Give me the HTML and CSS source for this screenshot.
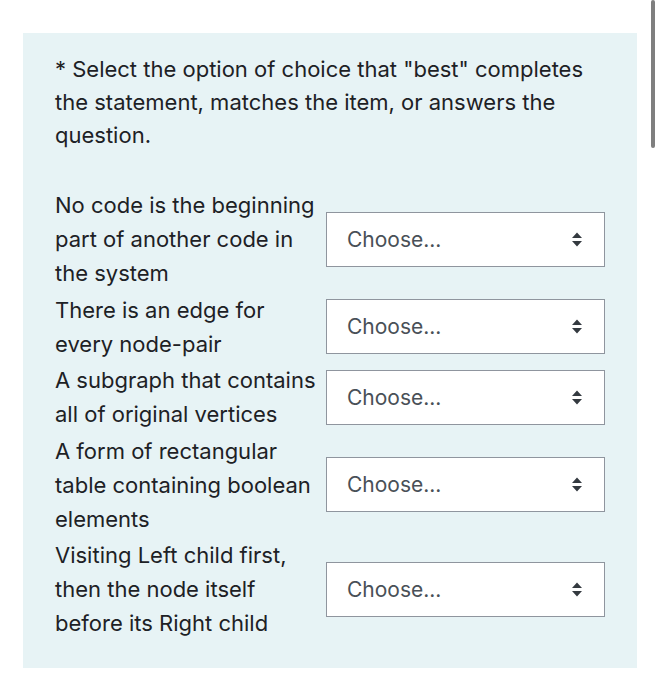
FILE: index.html
```html
<!DOCTYPE html>
<html>
<head>
<meta charset="utf-8">
<link rel="stylesheet" href="styles.css">
</head>
<body>
<div class="scrollbar"></div>
<div class="panel">
  <p class="prompt">* Select the option of choice that "best" completes the statement, matches the item, or answers the question.</p>
  <div class="rows">
    <div class="row">
      <div class="label">No code is the beginning part of another code in the system</div>
      <div class="select"><span>Choose...</span><svg class="arrows" width="10" height="15" viewBox="0 0 10 15"><path d="M5 0.5 L10 6 H0 Z M5 14.5 L10 9 H0 Z" fill="#343a40"/></svg></div>
    </div>
    <div class="row">
      <div class="label">There is an edge for every node-pair</div>
      <div class="select"><span>Choose...</span><svg class="arrows" width="10" height="15" viewBox="0 0 10 15"><path d="M5 0.5 L10 6 H0 Z M5 14.5 L10 9 H0 Z" fill="#343a40"/></svg></div>
    </div>
    <div class="row">
      <div class="label">A subgraph that contains all of original vertices</div>
      <div class="select"><span>Choose...</span><svg class="arrows" width="10" height="15" viewBox="0 0 10 15"><path d="M5 0.5 L10 6 H0 Z M5 14.5 L10 9 H0 Z" fill="#343a40"/></svg></div>
    </div>
    <div class="row">
      <div class="label">A form of rectangular table containing boolean elements</div>
      <div class="select"><span>Choose...</span><svg class="arrows" width="10" height="15" viewBox="0 0 10 15"><path d="M5 0.5 L10 6 H0 Z M5 14.5 L10 9 H0 Z" fill="#343a40"/></svg></div>
    </div>
    <div class="row">
      <div class="label">Visiting Left child first, then the node itself before&nbsp;its Right child</div>
      <div class="select"><span>Choose...</span><svg class="arrows" width="10" height="15" viewBox="0 0 10 15"><path d="M5 0.5 L10 6 H0 Z M5 14.5 L10 9 H0 Z" fill="#343a40"/></svg></div>
    </div>
  </div>
</div>
</body>
</html>
```
FILE: styles.css
```css
html, body {
  margin: 0;
  padding: 0;
  background: #ffffff;
}
body {
  padding: 33px 22px 33px 23px;
  font-family: Inter, "Liberation Sans", sans-serif;
  color: #1d2125;
}
.scrollbar {
  position: absolute;
  left: 651px;
  top: 0;
  width: 4px;
  height: 148px;
  background: #7f7f7f;
  border-radius: 2px;
}
.panel {
  background: #e7f3f5;
  padding: 20px 32px 28px 32px;
}
.prompt {
  margin: 0 0 36px 0;
  font-size: 22px;
  line-height: 33px;
}
.rows {
  display: flex;
  flex-direction: column;
  gap: 2.5px;
}
.row {
  display: flex;
  align-items: center;
}
.label {
  width: 262px;
  font-size: 22px;
  line-height: 34px;
  margin-right: 9px;
}
.select {
  box-sizing: border-box;
  width: 279px;
  height: 55px;
  border: 1px solid #8f959e;
  background: #ffffff;
  display: flex;
  align-items: center;
  justify-content: space-between;
  padding: 0 22px 0 20px;
  font-size: 21px;
  color: #495057;
}
.arrows {
  display: block;
}
```
